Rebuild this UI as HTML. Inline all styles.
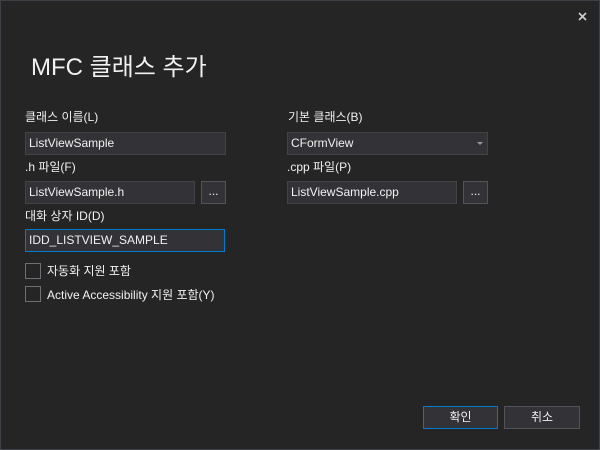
<!DOCTYPE html>
<html><head><meta charset="utf-8"><style>
*{box-sizing:border-box;margin:0;padding:0}
body{width:600px;height:450px;background:#252526;overflow:hidden;font-family:"Liberation Sans","Noto Sans CJK KR",sans-serif;color:#f1f1f1;position:relative;font-size:12px}
.frame{position:absolute;left:0;top:0;width:600px;height:450px;border:1px solid #3f3f46}
.a{position:absolute}
.lbl{position:absolute;font-size:12px;color:#f1f1f1;line-height:14px}
.in{position:absolute;background:#333337;border:1px solid #434346;height:23px;line-height:21px;padding-left:3px;font-size:12px;color:#f1f1f1}
.btn{position:absolute;background:#333337;border:1px solid #545458;height:23px;text-align:center;line-height:19px;font-size:12px;color:#f1f1f1}
.cb{position:absolute;width:16px;height:16px;border:1px solid #6e6e74;background:#252526}
</style></head><body>
<div class="frame"></div>
<svg class="a" style="left:578px;top:12px" width="9" height="9" viewBox="0 0 9 9"><path d="M1 1L8 8M8 1L1 8" stroke="#cfcfcf" stroke-width="1.6"/></svg>
<div class="a" style="left:31px;top:53px;font-size:24px;line-height:30px;color:#f1f1f1">MFC 클래스 추가</div>

<div class="lbl" style="left:25px;top:110px">클래스 이름(L)</div>
<div class="in" style="left:25px;top:132px;width:201px">ListViewSample</div>
<div class="lbl" style="left:25px;top:160px">.h 파일(F)</div>
<div class="in" style="left:25px;top:181px;width:170px">ListViewSample.h</div>
<div class="btn" style="left:201px;top:181px;width:25px">...</div>
<div class="lbl" style="left:25px;top:209px">대화 상자 ID(D)</div>
<div class="in" style="left:25px;top:229px;width:200px;border-color:#007acc">IDD_LISTVIEW_SAMPLE</div>

<div class="cb" style="left:25px;top:263px"></div>
<div class="lbl" style="left:47px;top:264px">자동화 지원 포함</div>
<div class="cb" style="left:25px;top:286px"></div>
<div class="lbl" style="left:47px;top:288px">Active Accessibility 지원 포함(Y)</div>

<div class="lbl" style="left:288px;top:110px">기본 클래스(B)</div>
<div class="in" style="left:287px;top:132px;width:201px">CFormView</div>
<svg class="a" style="left:477px;top:142px" width="6" height="4"><path d="M0 0H6L3 3Z" fill="#999"/></svg>
<div class="lbl" style="left:287px;top:160px">.cpp 파일(P)</div>
<div class="in" style="left:287px;top:181px;width:170px">ListViewSample.cpp</div>
<div class="btn" style="left:463px;top:181px;width:25px">...</div>

<div class="btn" style="left:423px;top:406px;width:75px;border-color:#007acc;line-height:21px">확인</div>
<div class="btn" style="left:504px;top:406px;width:76px;line-height:21px">취소</div>
</body></html>
